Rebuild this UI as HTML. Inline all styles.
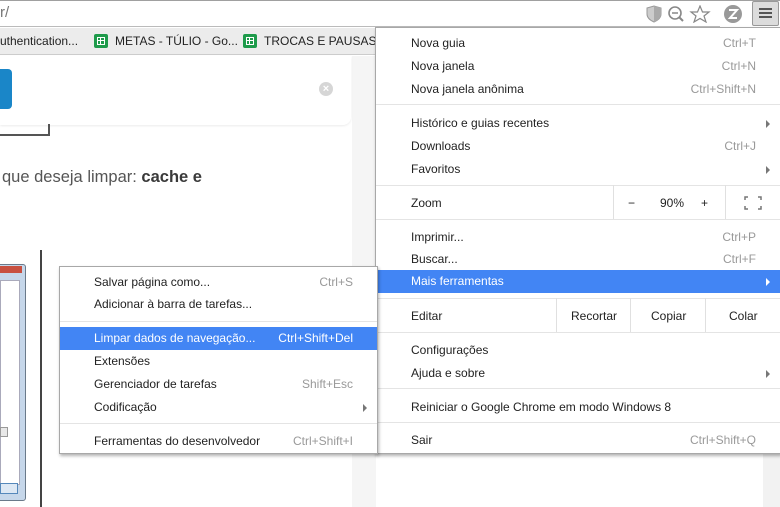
<!DOCTYPE html>
<html><head><meta charset="utf-8"><style>
*{margin:0;padding:0;box-sizing:border-box}
body{width:780px;height:507px;overflow:hidden;position:relative;background:#fff;font-family:"Liberation Sans",sans-serif;font-size:12px;color:#222}
.a{position:absolute}
.menu{position:absolute;background:#fff;border:1px solid #a8a8a8;box-shadow:1px 2px 3px rgba(0,0,0,.3)}
.it{position:absolute;left:0;right:0;height:23px;line-height:23px}
.it .t{position:absolute}
.it .s{position:absolute;color:#999;text-align:right}
.sep{position:absolute;left:0;right:0;height:1px;background:#e4e4e4}
.hl{background:#4285f4;color:#fff}
.arr{position:absolute;width:0;height:0;border-left:4px solid #777;border-top:4px solid transparent;border-bottom:4px solid transparent}
.vl{position:absolute;width:1px;background:#e0e0e0}
.bk{position:absolute;top:34px;width:14px;height:14px;background:#1e9b4b;border-radius:2px}
.bk i{position:absolute;left:3px;top:3px;width:8px;height:8px;border:1px solid #fff;background:linear-gradient(#fff,#fff) 0 2px/8px 1px no-repeat,linear-gradient(#fff,#fff) 2px 0/1px 8px no-repeat}
</style></head><body>
<div class="a" style="left:0;top:0;width:780px;height:1px;background:#a0a0a0"></div>
<div class="a" style="left:0;top:1px;width:720px;height:26px;background:#fff;border-bottom:1px solid #bbb"></div>
<div class="a" style="left:0;top:4px;font-size:15px;color:#777">r/</div>
<svg class="a" style="left:645px;top:5px" width="70" height="18" viewBox="0 0 70 18">
<path d="M2 3 L9 1 L16 3 L16 9 Q16 14 9 17 Q2 14 2 9 Z" fill="#ccc" stroke="#999"/>
<path d="M9 1 L9 17 Q16 14 16 9 L16 3 Z" fill="#aaa"/>
<circle cx="30" cy="8" r="6" fill="none" stroke="#888" stroke-width="1.6"/><line x1="27" y1="8" x2="33" y2="8" stroke="#888" stroke-width="1.5"/><line x1="34" y1="12" x2="38" y2="16" stroke="#888" stroke-width="2"/>
<path d="M55 1 L57.5 7 L64 7 L59 11 L61 17 L55 13.5 L49 17 L51 11 L46 7 L52.5 7 Z" fill="none" stroke="#888" stroke-width="1.2"/>
</svg>
<svg class="a" style="left:723px;top:4px" width="20" height="20"><circle cx="10" cy="10" r="9" fill="#999"/><path d="M6 6 H14 L7 14 H14" stroke="#fff" stroke-width="2" fill="none"/></svg>
<div class="a" style="left:752px;top:1px;width:27px;height:25px;background:#dcdcdc;border:1px solid #999;border-radius:2px"></div>
<div class="a" style="left:759px;top:8px;width:13px;height:2px;background:#555;box-shadow:0 4px 0 #555,0 8px 0 #555"></div>
<div class="a" style="left:0;top:28px;width:376px;height:27px;background:#ececec;border-bottom:1px solid #ccc"></div>
<div class="a" style="left:0;top:34px;font-size:12px;color:#222">uthentication...</div>
<div class="bk" style="left:94px"><i></i></div>
<div class="a" style="left:115px;top:34px;font-size:12px">METAS - TÚLIO - Go...</div>
<div class="bk" style="left:243px"><i></i></div>
<div class="a" style="left:264px;top:34px;font-size:12px">TROCAS E PAUSAS -.</div>
<div class="a" style="left:352px;top:56px;width:24px;height:451px;background:#f5f5f5"></div>
<div class="a" style="left:0;top:56px;width:351px;height:69px;background:#fff;border-radius:0 0 8px 0;box-shadow:0 1px 2px rgba(0,0,0,.08)"></div>
<div class="a" style="left:-6px;top:69px;width:18px;height:40px;background:#1a86c8;border-radius:4px"></div>
<div class="a" style="left:0;top:124px;width:50px;height:12px;border-right:2px solid #555;border-bottom:2px solid #555"></div>
<div class="a" style="left:319px;top:82px;width:14px;height:14px;border-radius:50%;background:#d6d6d6;color:#fff;font-size:11px;line-height:14px;text-align:center;font-weight:bold">×</div>
<div class="a" style="left:2px;top:168px;font-size:16.5px;color:#555">que deseja limpar: <b style="color:#3a3a3a">cache e</b></div>
<div class="a" style="left:40px;top:250px;width:2px;height:257px;background:#444"></div>
<div class="a" style="left:-4px;top:264px;width:30px;height:237px;background:#c6d7ea;border:1px solid #6a7a8a;border-radius:3px"></div>
<div class="a" style="left:0;top:266px;width:22px;height:7px;background:#c85040"></div>
<div class="a" style="left:0;top:280px;width:20px;height:205px;background:#fff;border:1px solid #aab"></div>
<div class="a" style="left:0;top:427px;width:8px;height:10px;background:#e8e8e8;border:1px solid #999"></div>
<div class="a" style="left:0;top:483px;width:18px;height:11px;background:#dde8f4;border:1px solid #5588bb"></div>
<div class="a" style="left:763px;top:453px;width:17px;height:54px;background:#f2f2f2"></div>

<div class="menu" style="left:375px;top:27px;width:406px;height:427px">
<div class="it" style="top:4px"><span class="t" style="left:35px">Nova guia</span><span class="s" style="right:24px">Ctrl+T</span></div>
<div class="it" style="top:27px"><span class="t" style="left:35px">Nova janela</span><span class="s" style="right:24px">Ctrl+N</span></div>
<div class="it" style="top:50px"><span class="t" style="left:35px">Nova janela anônima</span><span class="s" style="right:24px">Ctrl+Shift+N</span></div>
<div class="sep" style="top:76px"></div>
<div class="it" style="top:84px"><span class="t" style="left:35px">Histórico e guias recentes</span><i class="arr" style="right:10px;top:8px"></i></div>
<div class="it" style="top:107px"><span class="t" style="left:35px">Downloads</span><span class="s" style="right:24px">Ctrl+J</span></div>
<div class="it" style="top:130px"><span class="t" style="left:35px">Favoritos</span><i class="arr" style="right:10px;top:8px"></i></div>
<div class="sep" style="top:157px"></div>
<div class="it" style="top:164px"><span class="t" style="left:35px">Zoom</span><span class="t" style="left:252px">−</span><span class="t" style="left:284px">90%</span><span class="t" style="left:325px">+</span></div>
<svg class="a" style="left:368px;top:168px" width="18" height="14"><path d="M1 4V1H4M14 1H17V4M1 10V13H4M14 13H17V10" stroke="#777" fill="none" stroke-width="1.5"/></svg>
<div class="vl" style="left:237px;top:157px;height:35px"></div>
<div class="vl" style="left:349px;top:157px;height:35px"></div>
<div class="sep" style="top:191px"></div>
<div class="it" style="top:198px"><span class="t" style="left:35px">Imprimir...</span><span class="s" style="right:24px">Ctrl+P</span></div>
<div class="it" style="top:220px"><span class="t" style="left:35px">Buscar...</span><span class="s" style="right:24px">Ctrl+F</span></div>
<div class="it hl" style="top:242px"><span class="t" style="left:35px">Mais ferramentas</span><i class="arr" style="right:10px;top:8px;border-left-color:#fff"></i></div>
<div class="sep" style="top:270px"></div>
<div class="it" style="top:277px"><span class="t" style="left:35px">Editar</span><span class="t" style="left:195px">Recortar</span><span class="t" style="left:275px">Copiar</span><span class="t" style="left:353px">Colar</span></div>
<div class="vl" style="left:180px;top:270px;height:35px"></div>
<div class="vl" style="left:254px;top:270px;height:35px"></div>
<div class="vl" style="left:329px;top:270px;height:35px"></div>
<div class="sep" style="top:304px"></div>
<div class="it" style="top:311px"><span class="t" style="left:35px">Configurações</span></div>
<div class="it" style="top:334px"><span class="t" style="left:35px">Ajuda e sobre</span><i class="arr" style="right:10px;top:8px"></i></div>
<div class="sep" style="top:360px"></div>
<div class="it" style="top:368px"><span class="t" style="left:35px">Reiniciar o Google Chrome em modo Windows 8</span></div>
<div class="sep" style="top:394px"></div>
<div class="it" style="top:401px"><span class="t" style="left:35px">Sair</span><span class="s" style="right:24px">Ctrl+Shift+Q</span></div>
</div>

<div class="menu" style="left:59px;top:266px;width:319px;height:188px">
<div class="it" style="top:4px"><span class="t" style="left:34px">Salvar página como...</span><span class="s" style="right:24px">Ctrl+S</span></div>
<div class="it" style="top:26px"><span class="t" style="left:34px">Adicionar à barra de tarefas...</span></div>
<div class="sep" style="top:54px"></div>
<div class="it hl" style="top:60px"><span class="t" style="left:34px">Limpar dados de navegação...</span><span class="s" style="right:24px;color:#fff">Ctrl+Shift+Del</span></div>
<div class="it" style="top:83px"><span class="t" style="left:34px">Extensões</span></div>
<div class="it" style="top:106px"><span class="t" style="left:34px">Gerenciador de tarefas</span><span class="s" style="right:24px">Shift+Esc</span></div>
<div class="it" style="top:129px"><span class="t" style="left:34px">Codificação</span><i class="arr" style="right:10px;top:8px"></i></div>
<div class="sep" style="top:156px"></div>
<div class="it" style="top:163px"><span class="t" style="left:34px">Ferramentas do desenvolvedor</span><span class="s" style="right:24px">Ctrl+Shift+I</span></div>
</div>
</body></html>
